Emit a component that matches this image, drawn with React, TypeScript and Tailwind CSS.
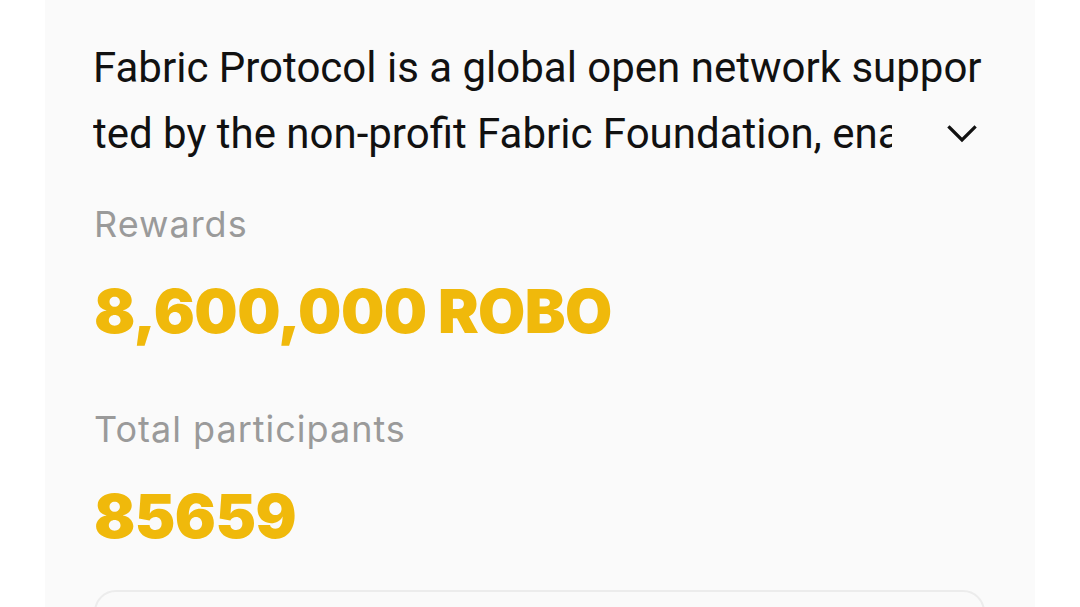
const description =
  "Fabric Protocol is a global open network supported by the non-profit Fabric Foundation, enabling the construction, governance, and collaborative evolution of general-purpose robots."

const Stat = ({ label, value, first }: { label: string; value: string; first?: boolean }) => {
  return (
    <div className={first ? "flex flex-col mt-[35px]" : "flex flex-col mt-[58px]"}>
      <div className="font-['Inter',sans-serif] text-[36px] leading-[44px] tracking-[1px] text-[#9a9a9a]">
        {label}
      </div>
      <div className="mt-[27px] font-['Inter',sans-serif] font-black text-[61px] leading-[76px] tracking-[-0.6px] text-[#f0b90b]">
        {value}
      </div>
    </div>
  )
}

export default function App() {
  return (
    <div className="w-full h-[607px] bg-white overflow-hidden px-[45px]">
      <div className="h-full bg-[#fafafa] pl-[49px] pr-[50px] pt-[35px]">
        <div className="relative h-[132px]">
          <p className="font-['Roboto',sans-serif] text-[42px] leading-[66px] text-[#111] break-all line-clamp-2 -ml-px">
            {description}
          </p>
          <div className="absolute right-0 bottom-0 w-[93px] h-[66px] bg-[#fafafa] flex items-center justify-end pr-[8px]">
            <svg width="30" height="18" viewBox="0 0 30 18" fill="none">
              <polyline
                points="2.5,2.5 15,15 27.5,2.5"
                stroke="#111"
                strokeWidth="3.2"
                strokeLinecap="square"
              />
            </svg>
          </div>
        </div>
        <Stat label="Rewards" value="8,600,000 ROBO" first />
        <Stat label="Total participants" value="85659" />
        <div className="mt-[36px] h-[120px] rounded-[22px] border-2 border-[#ececec]" />
      </div>
    </div>
  )
}
